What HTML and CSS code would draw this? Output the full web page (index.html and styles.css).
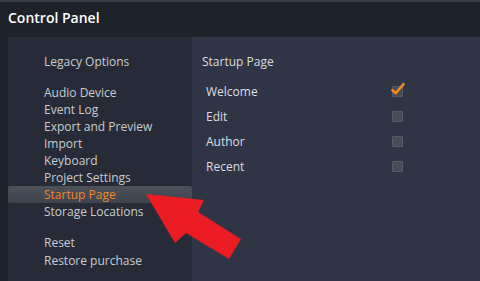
FILE: index.html
```html
<!DOCTYPE html>
<html>
<head>
<meta charset="utf-8">
<link rel="stylesheet" href="styles.css">
</head>
<body>
<div class="topline"></div>
<header class="titlebar">Control Panel</header>
<main class="main">
  <nav class="sidebar">
    <ul class="group">
      <li class="item">Legacy Options</li>
    </ul>
    <ul class="group">
      <li class="item">Audio Device</li>
      <li class="item">Event Log</li>
      <li class="item">Export and Preview</li>
      <li class="item">Import</li>
      <li class="item">Keyboard</li>
      <li class="item">Project Settings</li>
      <li class="item active">Startup Page</li>
      <li class="item">Storage Locations</li>
    </ul>
    <ul class="group last">
      <li class="item">Reset</li>
      <li class="item">Restore purchase</li>
    </ul>
  </nav>
  <section class="content">
    <h2 class="heading">Startup Page</h2>
    <div class="options">
      <label class="option"><span>Welcome</span><span class="box checked"><svg viewBox="0 0 14 14" width="14" height="14"><path d="M1.5 8.2 L4.8 11.2 L12.5 2.2" fill="none" stroke="#f08a1c" stroke-width="2.6" stroke-linecap="round" stroke-linejoin="round"/></svg></span></label>
      <label class="option"><span>Edit</span><span class="box"></span></label>
      <label class="option"><span>Author</span><span class="box"></span></label>
      <label class="option"><span>Recent</span><span class="box"></span></label>
    </div>
  </section>
</main>
<svg class="arrow" width="480" height="281" viewBox="0 0 480 281">
  <polygon points="146,194 204,200 198,212 241,239 229,259 186,233 175,243" fill="#ec1c24"/>
</svg>
</body>
</html>
```
FILE: styles.css
```css
html, body {
  margin: 0;
  padding: 0;
}
body {
  width: 480px;
  height: 281px;
  overflow: hidden;
  background: #1e222a;
  font-family: "Open Sans", "Noto Sans", sans-serif;
  position: relative;
}
.topline {
  height: 2px;
  background: #393d47;
}
.titlebar {
  height: 35px;
  display: flex;
  align-items: center;
  padding-left: 8px;
  color: #ffffff;
  font-weight: 600;
  font-size: 14px;
  box-sizing: border-box;
  padding-bottom: 4px;
}
.main {
  display: flex;
  margin-left: 8px;
  height: 244px;
}
.sidebar {
  width: 184px;
  background: #272b37;
  padding-top: 16px;
  box-sizing: border-box;
}
.group {
  list-style: none;
  margin: 0 0 14px 0;
  padding: 0;
}
.group.last .item {
  height: 18px;
  line-height: 18px;
}
.item {
  height: 17px;
  line-height: 17px;
  padding-left: 36px;
  font-size: 12px;
  color: #c8cbd1;
  white-space: nowrap;
}
.item.active {
  color: #ee8a26;
  background: linear-gradient(#4d515c, #3e424c);
  border-radius: 2px;
}
.content {
  flex: 1;
  background: #303546;
  padding: 16px 0 0 10px;
  box-sizing: border-box;
}
.heading {
  margin: 0;
  height: 17px;
  line-height: 17px;
  font-size: 12px;
  font-weight: 400;
  color: #d8dade;
}
.options {
  margin-top: 9px;
  padding-left: 4px;
  width: 197px;
}
.option {
  display: flex;
  justify-content: space-between;
  align-items: center;
  height: 25px;
  font-size: 12px;
  color: #dcdee2;
}
.box {
  position: relative;
  width: 9px;
  height: 9px;
  border: 1px solid #565b66;
  background: #464b56;
  border-radius: 1px;
}
.box svg {
  position: absolute;
  left: -2px;
  top: -5px;
}
.arrow {
  position: absolute;
  left: 0;
  top: 0;
  pointer-events: none;
}
```
